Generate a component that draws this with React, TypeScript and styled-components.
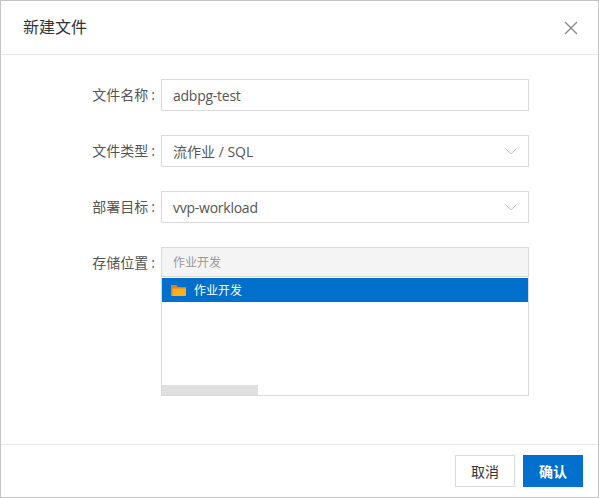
import React from "react";
import styled, {createGlobalStyle} from "styled-components";

const Global = createGlobalStyle`
    html, body {
        margin: 0;
        padding: 0;
        background: #fff;
    }
    body {
        font-family: "Open Sans", "Noto Sans CJK SC", sans-serif;
    }
`;

const Dialog = styled.div`
    box-sizing: border-box;
    width: 599px;
    height: 498px;
    border: 1px solid #c4c4c4;
    display: flex;
    flex-direction: column;
    background: #fff;
`;

const Header = styled.div`
    box-sizing: border-box;
    height: 54px;
    flex: none;
    padding: 0 20px 0 22px;
    border-bottom: 1px solid #e8e8e8;
    display: flex;
    align-items: center;
    justify-content: space-between;
`;

const Title = styled.div`
    margin-top: -3px;
    font-size: 16px;
    color: #333;
`;

const Body = styled.div`
    flex: 1;
    padding: 24px 69px 0 0;
    display: flex;
    flex-direction: column;
    gap: 24px;
`;

const Row = styled.div`
    display: grid;
    grid-template-columns: 160px 368px;
    align-items: start;
`;

const Label = styled.div`
    box-sizing: border-box;
    height: 32px;
    padding-right: 6px;
    line-height: 32px;
    text-align: right;
    font-size: 14px;
    color: #555;
`;

const Colon = styled.span`
    margin-left: 3px;
`;

const Field = styled.div<{$tracking?: number}>`
    box-sizing: border-box;
    height: 32px;
    padding: 0 11px;
    border: 1px solid #d9d9d9;
    display: flex;
    align-items: center;
    justify-content: space-between;
    font-size: 14px;
    letter-spacing: ${(p) => p.$tracking ?? 0}px;
    color: #555;
`;

const DisabledField = styled(Field)`
    height: 30px;
    background: #f4f4f4;
    font-size: 12px;
    color: #999;
`;

const Tree = styled.div`
    position: relative;
    box-sizing: border-box;
    height: 119px;
    border: 1px solid #d9d9d9;
    border-top: 1px solid #fff;
`;

const TreeNode = styled.div`
    height: 24px;
    padding-left: 9px;
    display: flex;
    align-items: center;
    gap: 8px;
    background: #0070cc;
    color: #fff;
    font-size: 12px;
`;

const ScrollThumb = styled.div`
    position: absolute;
    left: 0;
    bottom: 0;
    width: 96px;
    height: 10px;
    background: #e0e0e0;
`;

const Footer = styled.div`
    box-sizing: border-box;
    height: 53px;
    flex: none;
    padding: 10px 15px 10px 0;
    border-top: 1px solid #e8e8e8;
    display: flex;
    justify-content: flex-end;
    gap: 8px;
`;

const Button = styled.button<{$primary?: boolean}>`
    box-sizing: border-box;
    width: 60px;
    height: 32px;
    padding: 0;
    border: 1px solid ${(p) => (p.$primary ? "#0070cc" : "#d9d9d9")};
    background: ${(p) => (p.$primary ? "#0070cc" : "#fff")};
    color: ${(p) => (p.$primary ? "#fff" : "#333")};
    font-family: inherit;
    font-size: 14px;
    font-weight: ${(p) => (p.$primary ? 700 : 400)};
`;

const Chevron = () => (
    <svg width="12" height="7" viewBox="0 0 12 7" fill="none" stroke="#c4c6cf" strokeWidth="1">
        <path d="M0.5 0.5 L6 6 L11.5 0.5" />
    </svg>
);

const Close = () => (
    <svg width="14" height="14" viewBox="0 0 14 14" fill="none" stroke="#8a8a8a" strokeWidth="1.4">
        <path d="M1 1 L13 13 M13 1 L1 13" />
    </svg>
);

const Folder = () => (
    <svg width="15" height="11" viewBox="0 0 15 11">
        <path d="M0 0 H5.5 L7 2 H15 V11 H0 Z" fill="#ed7b12" />
        <rect x="1.5" y="3.5" width="13.5" height="7.5" fill="#fdb01e" />
    </svg>
);

function App() {
    return (
        <Dialog>
            <Global />
            <Header>
                <Title>新建文件</Title>
                <Close />
            </Header>
            <Body>
                <Row>
                    <Label>文件名称<Colon>:</Colon></Label>
                    <Field $tracking={-0.25}>adbpg-test</Field>
                </Row>
                <Row>
                    <Label>文件类型<Colon>:</Colon></Label>
                    <Field>
                        流作业 / SQL
                        <Chevron />
                    </Field>
                </Row>
                <Row>
                    <Label>部署目标<Colon>:</Colon></Label>
                    <Field $tracking={-0.25}>
                        vvp-workload
                        <Chevron />
                    </Field>
                </Row>
                <Row>
                    <Label>存储位置<Colon>:</Colon></Label>
                    <div>
                        <DisabledField>作业开发</DisabledField>
                        <Tree>
                            <TreeNode>
                                <Folder />
                                作业开发
                            </TreeNode>
                            <ScrollThumb />
                        </Tree>
                    </div>
                </Row>
            </Body>
            <Footer>
                <Button>取消</Button>
                <Button $primary>确认</Button>
            </Footer>
        </Dialog>
    );
}

export default App;
